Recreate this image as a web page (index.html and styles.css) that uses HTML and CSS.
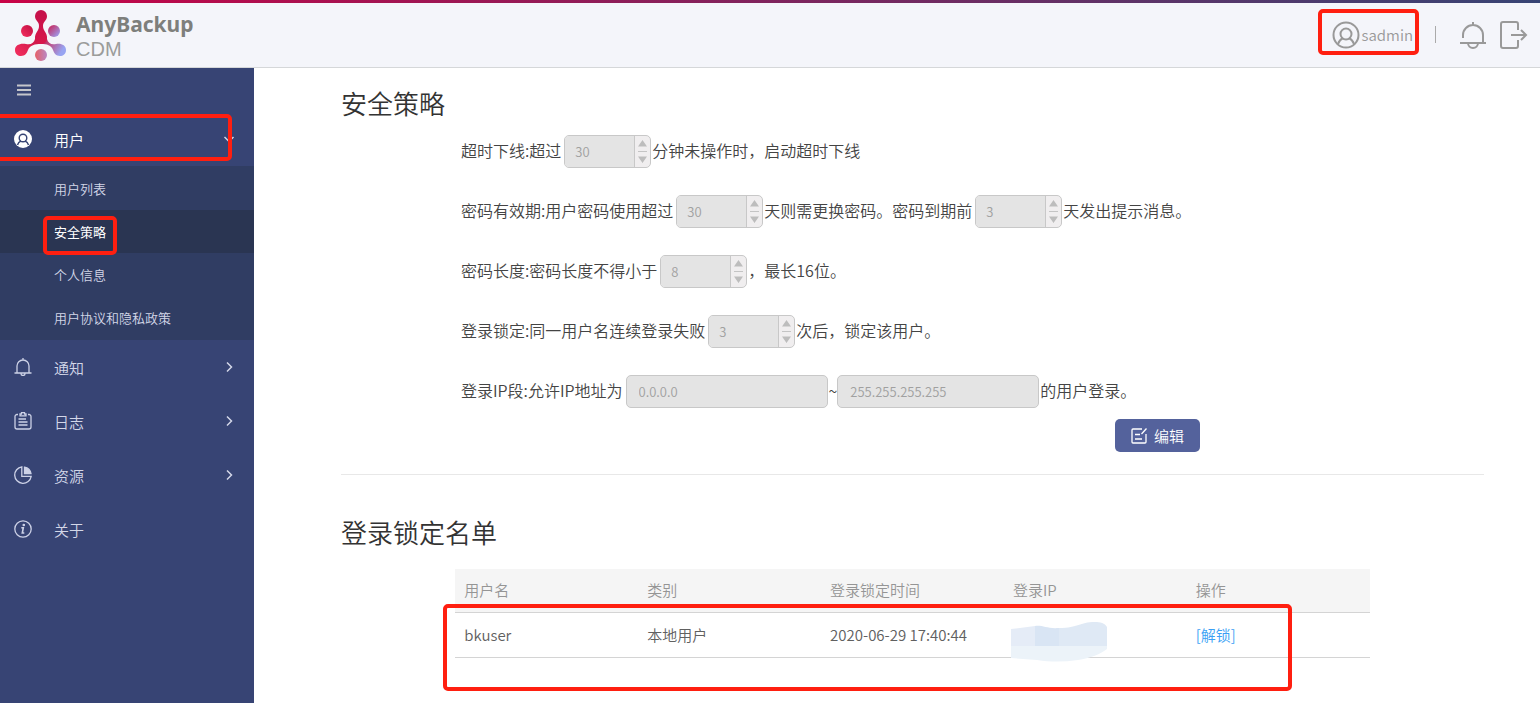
FILE: index.html
```html
<!DOCTYPE html>
<html lang="zh-CN">
<head>
<meta charset="utf-8">
<meta name="viewport" content="width=device-width, initial-scale=1">
<title>AnyBackup CDM</title>
<link rel="stylesheet" href="styles.css">
</head>
<body>
<header class="topbar">
  <a class="brand" href="#">
    <svg class="brand-mark" width="52" height="52" viewBox="0 0 52 52" aria-hidden="true">
      <defs>
        <linearGradient id="gl" x1="1" y1="0" x2="0" y2="1"><stop offset="0" stop-color="#c00d42"/><stop offset="1" stop-color="#f5305f"/></linearGradient>
        <linearGradient id="gr" gradientUnits="userSpaceOnUse" x1="26" y1="28" x2="47" y2="41"><stop offset="0" stop-color="#c00d42"/><stop offset=".4" stop-color="#c04a80"/><stop offset="1" stop-color="#98a4f2"/></linearGradient>
        <linearGradient id="gt" x1="0" y1="0" x2="0" y2="1"><stop offset="0" stop-color="#c4104a"/><stop offset="1" stop-color="#d8174b"/></linearGradient>
        <linearGradient id="gs" x1="0" y1="0" x2="1" y2="1"><stop offset="0" stop-color="#cb1c50"/><stop offset="1" stop-color="#98acff"/></linearGradient>
        <linearGradient id="gb" x1="0" y1="0" x2="1" y2="0"><stop offset="0" stop-color="#e66068"/><stop offset="1" stop-color="#b988c4"/></linearGradient>
      </defs>
      <path fill="url(#gr)" d="M26 23c4 0 6 3 6 6 1 4 4 6 9 5 5-1 10 1 10 6 0 4-3 6-6 6-4 0-6-3-7-6-2-5-6-6-12-6z"/>
      <path fill="url(#gl)" d="M26 23c-4 0-6 3-6 6-1 4-4 6-9 5-6-1-11 1-11 6 0 4 3 6 6 6 4 0 6-3 7-6 2-5 7-6 13-6z"/>
      <path fill="url(#gt)" d="M26 0a6.200 6.200 0 0 1 6 6c0 5-4 5-4 10 0 5 4 6 4 12 0 4-3 6-6 6s-6-2-6-6c0-6 4-7 4-12 0-5-4-5-4-10a6.200 6.200 0 0 1 6-6z"/>
      <circle cx="12" cy="21" r="6" fill="url(#gl)"/><circle cx="39" cy="21" r="6" fill="url(#gs)"/><circle cx="26" cy="45" r="6" fill="url(#gb)"/>
    </svg>
    <span class="brand-text"><strong>AnyBackup</strong><span class="brand-sub">CDM</span></span>
  </a>
  <div class="tools">
    <button class="user" type="button">
      <svg width="28" height="28" viewBox="0 0 28 28" class="line" aria-hidden="true"><circle cx="14" cy="14" r="12.500"/><circle cx="14" cy="13" r="5.500"/><path d="M6 23c1-3 3-5 5-6m11 6c-1-3-3-5-5-6"/></svg>
      <span>sadmin</span>
      <span class="mark mark-user"></span>
    </button>
    <span class="divider"></span>
    <button class="icon-btn bell" type="button" aria-label="通知"><svg width="28" height="28" viewBox="0 0 28 28" class="line" aria-hidden="true"><path d="M1 22h26M4 17v-3a10 10 0 0 1 20 0v8M14 1v3M9 22a5 5 0 0 0 10 0"/></svg></button>
    <button class="icon-btn" type="button" aria-label="退出"><svg width="28" height="28" viewBox="0 0 28 28" class="line" aria-hidden="true"><path d="M18 9V3a2 2 0 0 0-2-2H3a2 2 0 0 0-2 2v22a2 2 0 0 0 2 2h13a2 2 0 0 0 2-2v-6M11 14h15M21 9l5 5-5 5"/></svg></button>
  </div>
</header>
<div class="layout">
  <nav class="side">
    <button class="burger" type="button" aria-label="菜单"><svg width="14" height="12" viewBox="0 0 14 12" aria-hidden="true"><path d="M0 1.500h14M0 6h14M0 10.500h14" stroke="#c5c6cb" stroke-width="2"/></svg></button>
    <ul class="menu">
      <li>
        <a class="item open" href="#">
          <svg width="18" height="18" viewBox="0 0 18 18" aria-hidden="true"><circle cx="9" cy="9" r="9" fill="#fff"/><g fill="none" stroke="#374474" stroke-width="1.400"><circle cx="9" cy="8" r="3.800"/><path d="M3.500 15c.5-2 2-3.500 3.500-4m7.500 4c-.5-2-2-3.500-3.500-4"/></g></svg>
          <span class="item-text">用户</span>
          <svg class="arrow" width="12" height="12" viewBox="0 0 12 12" aria-hidden="true"><path d="M1.500 4 6 8.500 10.500 4"/></svg>
          <span class="mark mark-item"></span>
        </a>
        <ul class="sub">
          <li><a href="#">用户列表</a></li>
          <li><a class="active" href="#"><span class="sub-text">安全策略<span class="mark mark-sub"></span></span></a></li>
          <li><a href="#">个人信息</a></li>
          <li><a href="#">用户协议和隐私政策</a></li>
        </ul>
      </li>
      <li><a class="item" href="#">
        <svg class="side-line" width="18" height="18" viewBox="0 0 18 18" aria-hidden="true"><path d="M.5 15h17M3 15V8a6 6 0 0 1 12 0v7M9 0v2M7 15.500a2 2 0 0 0 4 0"/></svg>
        <span class="item-text">通知</span>
        <svg class="arrow" width="12" height="12" viewBox="0 0 12 12" aria-hidden="true"><path d="m4 1.500 4.500 4.500L4 10.500"/></svg></a></li>
      <li><a class="item" href="#">
        <svg class="side-line" width="18" height="18" viewBox="0 0 18 18" aria-hidden="true"><path d="M4 2.500H3a2 2 0 0 0-2 2V15a2 2 0 0 0 2 2h12a2 2 0 0 0 2-2V4.500a2 2 0 0 0-2-2h-1M6 3.800V2h1.500V.700h3V2H12v1.800zM4.500 7H12M4.500 10h9M4.500 13h9"/></svg>
        <span class="item-text">日志</span>
        <svg class="arrow" width="12" height="12" viewBox="0 0 12 12" aria-hidden="true"><path d="m4 1.500 4.500 4.500L4 10.500"/></svg></a></li>
      <li><a class="item" href="#">
        <svg class="side-line" width="18" height="18" viewBox="0 0 18 18" aria-hidden="true"><path d="M7.800.800a8.300 8.300 0 1 0 9.400 9.600H7.800z"/><path d="M10.500 1.200a8 8 0 0 1 6.500 6.500h-6.500z" fill="#ccd1e6"/></svg>
        <span class="item-text">资源</span>
        <svg class="arrow" width="12" height="12" viewBox="0 0 12 12" aria-hidden="true"><path d="m4 1.500 4.500 4.500L4 10.500"/></svg></a></li>
      <li><a class="item" href="#">
        <svg class="side-line" width="18" height="18" viewBox="0 0 18 18" aria-hidden="true"><circle cx="9" cy="9" r="8.200"/><path d="M7.300 7.700h2L8.300 13h2" stroke-width="1.600"/><circle cx="9.800" cy="5" r=".7"/></svg>
        <span class="item-text">关于</span></a></li>
    </ul>
  </nav>
  <main class="content">
    <h2>安全策略</h2>
    <form class="policy">
      <div class="row">
        <label for="timeout">超时下线:超过</label>
        <span class="stepper"><input id="timeout" type="number" value="30" disabled><svg width="15" height="31" viewBox="0 0 15 31" aria-hidden="true"><path d="M3 10.500 7.500 4l4.500 6.500zM3 20.500l4.500 6.500 4.500-6.500z" fill="#bdbdbd"/><path d="M3 15.500h9" stroke="#c4c4c4"/></svg></span>
        <span class="words">分钟未操作时，启动超时下线</span>
      </div>
      <div class="row">
        <label for="expire">密码有效期:用户密码使用超过</label>
        <span class="stepper"><input id="expire" type="number" value="30" disabled><svg width="15" height="31" viewBox="0 0 15 31" aria-hidden="true"><path d="M3 10.500 7.500 4l4.500 6.500zM3 20.500l4.500 6.500 4.500-6.500z" fill="#bdbdbd"/><path d="M3 15.500h9" stroke="#c4c4c4"/></svg></span>
        <label for="remind">天则需更换密码。密码到期前</label>
        <span class="stepper"><input id="remind" type="number" value="3" disabled><svg width="15" height="31" viewBox="0 0 15 31" aria-hidden="true"><path d="M3 10.500 7.500 4l4.500 6.500zM3 20.500l4.500 6.500 4.500-6.500z" fill="#bdbdbd"/><path d="M3 15.500h9" stroke="#c4c4c4"/></svg></span>
        <span class="words">天发出提示消息。</span>
      </div>
      <div class="row">
        <label for="length">密码长度:密码长度不得小于</label>
        <span class="stepper"><input id="length" type="number" value="8" disabled><svg width="15" height="31" viewBox="0 0 15 31" aria-hidden="true"><path d="M3 10.500 7.500 4l4.500 6.500zM3 20.500l4.500 6.500 4.500-6.500z" fill="#bdbdbd"/><path d="M3 15.500h9" stroke="#c4c4c4"/></svg></span>
        <span class="words">，最长16位。</span>
      </div>
      <div class="row">
        <label for="lock">登录锁定:同一用户名连续登录失败</label>
        <span class="stepper"><input id="lock" type="number" value="3" disabled><svg width="15" height="31" viewBox="0 0 15 31" aria-hidden="true"><path d="M3 10.500 7.500 4l4.500 6.500zM3 20.500l4.500 6.500 4.500-6.500z" fill="#bdbdbd"/><path d="M3 15.500h9" stroke="#c4c4c4"/></svg></span>
        <span class="words">次后，锁定该用户。</span>
      </div>
      <div class="row">
        <label for="ip-from">登录IP段:允许IP地址为</label>
        <input class="ip" id="ip-from" type="text" value="0.0.0.0" disabled>
        <label for="ip-to">~</label>
        <input class="ip ip-last" id="ip-to" type="text" value="255.255.255.255" disabled>
        <span class="words">的用户登录。</span>
      </div>
      <div class="actions">
        <button class="edit" type="button"><svg width="16" height="16" viewBox="0 0 16 16" aria-hidden="true"><path d="M11 1H2a1 1 0 0 0-1 1v12a1 1 0 0 0 1 1h12a1 1 0 0 0 1-1V6M4 6.500h5M4 11h7M10.500 6 15.500.500"/></svg><span>编辑</span></button>
      </div>
    </form>
    <section class="locked">
      <h2>登录锁定名单</h2>
      <div class="table-wrap">
        <table>
          <thead><tr><th>用户名</th><th>类别</th><th>登录锁定时间</th><th>登录IP</th><th>操作</th></tr></thead>
          <tbody><tr><td>bkuser</td><td>本地用户</td><td>2020-06-29 17:40:44</td><td class="masked">
            <svg class="smudge" width="104" height="42" viewBox="0 0 104 42" aria-hidden="true">
              <path d="M4 25h96v3c-6 5-17 9-29 11-14 2-28 2-41 0l-26-2z" fill="#ecf3f9"/>
              <path d="M4 8l24-3v20H4z" fill="#e5ecf7"/>
              <path d="M28 5c8-1 12 3 24 2v18H28z" fill="#d9e5f4"/>
              <path d="M52 7c20 0 20-6 36-6 5 0 10 1 12 5v19H52z" fill="#dfe9f5"/>
            </svg></td><td><a class="unlock" href="#">[解锁]</a></td></tr></tbody>
        </table>
        <span class="mark mark-table"></span>
      </div>
    </section>
  </main>
</div>
</body>
</html>
```
FILE: styles.css
```css
* { box-sizing: border-box; }

body {
  margin: 0;
  min-height: 100vh;
  display: flex;
  flex-direction: column;
  font-family: "Noto Sans CJK SC", sans-serif;
  font-weight: 350;
  font-size: 16px;
  color: #333;
  background: #fff;
}

button, input { font: inherit; }
button { border: 0; padding: 0; background: none; }
a { color: inherit; text-decoration: none; }
ul { list-style: none; margin: 0; padding: 0; }
svg { display: block; flex: none; }

/* Annotation frames laid over the interface */
.mark {
  position: absolute;
  border: 4px solid #ff1f10;
  border-radius: 5px;
  pointer-events: none;
}

/* Header */
.topbar {
  display: flex;
  justify-content: space-between;
  align-items: center;
  height: 68px;
  padding: 4px 12px 0 15px;
  border-bottom: 1px solid #d5d7d9;
  background: linear-gradient(90deg, #c80346, #374474) top / 100% 3px no-repeat #f4f5fa;
}
.brand { display: flex; align-items: center; gap: 9px; }
.brand-text { display: flex; flex-direction: column; }
.brand-text strong {
  font: bold 21px/26px "Noto Sans", sans-serif;
  color: #7e7f7c;
}
.brand-sub {
  font: 20px/24px "Liberation Sans", sans-serif;
  color: #9b9c9a;
}
.tools { display: flex; align-items: center; padding-bottom: 2px; color: #999; }
.line { fill: none; stroke: #999; stroke-width: 2; }
.user { position: relative; display: flex; align-items: center; gap: 2px; height: 28px; color: #999; }
.mark-user { inset: -12px -6px -6px -14px; }
.divider { width: 1px; height: 17px; margin: 0 23px; background: #aaa; }
.user + .divider { margin-left: 22px; }
.bell { margin-right: 13px; }

/* Sidebar */
.layout { display: flex; flex: 1; }
.side { flex: none; width: 254px; background: #374474; color: #d3d7e8; }
.burger { display: flex; align-items: center; width: 100%; height: 44px; padding-left: 17px; }
.item {
  position: relative;
  display: flex;
  align-items: center;
  gap: 22px;
  height: 54px;
  padding: 0 19px 0 14px;
  font-size: 15px;
}
.item-text { flex: 1; }
.item.open { color: #fff; }
.mark-item { inset: 2px 22px 5px -6px; }
.arrow { fill: none; stroke: #d3d7e8; stroke-width: 1.5; }
.side-line { fill: none; stroke: #ccd1e6; stroke-width: 1.3; }
.sub { padding: 1px 0; background: #303d63; font-size: 13px; }
.sub a { display: block; padding-left: 54px; line-height: 43px; }
.sub .active { background: #2a3552; color: #fff; font-weight: 400; }
.sub-text { position: relative; display: inline-block; }
.mark-sub { inset: 6px -11px -2px -11px; }

/* Content */
.content { flex: 1; min-width: 0; padding: 18px 56px 24px 87px; }
h2 { margin: 0; font-size: 26px; line-height: 34px; font-weight: 350; }
.policy { display: flex; flex-direction: column; gap: 27px; padding: 15px 0 22px 120px; border-bottom: 1px solid #e8e8e8; color: #444; }
.row { display: flex; align-items: center; height: 33px; white-space: nowrap; }
.row label, .words { padding-bottom: 3px; }
.stepper {
  display: flex;
  width: 87px;
  height: 33px;
  margin: 0 1px 0 3px;
  border: 1px solid #c8c8c8;
  border-radius: 5px;
  background: #f0eeef;
  overflow: hidden;
}
.stepper input {
  flex: 1;
  min-width: 0;
  padding: 0 10px;
  border: 0;
  border-right: 1px solid #c8c8c8;
  background: #e4e4e4;
  color: #a0a0a0;
  font-size: 13px;
  appearance: textfield;
}
.stepper input::-webkit-inner-spin-button { appearance: none; margin: 0; }
.ip {
  width: 202px;
  height: 33px;
  margin: 0 1px 0 3px;
  padding: 0 12px;
  border: 1px solid #c8c8c8;
  border-radius: 5px;
  background: #e4e4e4;
  color: #a0a0a0;
  font-size: 13px;
}
.ip-last { margin-left: 0; }
.actions { display: flex; justify-content: flex-end; margin-top: -16px; padding-right: 284px; }
.edit {
  display: flex;
  align-items: center;
  justify-content: center;
  gap: 7px;
  width: 85px;
  height: 33px;
  border-radius: 5px;
  background: #54629c;
  color: #fff;
  font-size: 15px;
}
.edit svg { fill: none; stroke: #fff; stroke-width: 1.3; }

.locked { padding-top: 40px; }
.table-wrap { position: relative; width: 80%; margin: 20px auto 0; }
table { width: 100%; border-collapse: separate; border-spacing: 0; table-layout: fixed; font-size: 15px; }
th, td { padding: 0 9px 2px; text-align: left; font-weight: 350; border-bottom: 1px solid #d4d4d4; }
th { height: 44px; background: #f5f5f5; color: #959595; }
td { height: 45px; color: #606060; }
.masked { position: relative; }
.smudge { position: absolute; left: 3px; top: 8px; }
.unlock { color: #3a9ff5; }
.mark-table { inset: 35px 78px -33px -12px; }

.user { font-size: 15px; }
```
